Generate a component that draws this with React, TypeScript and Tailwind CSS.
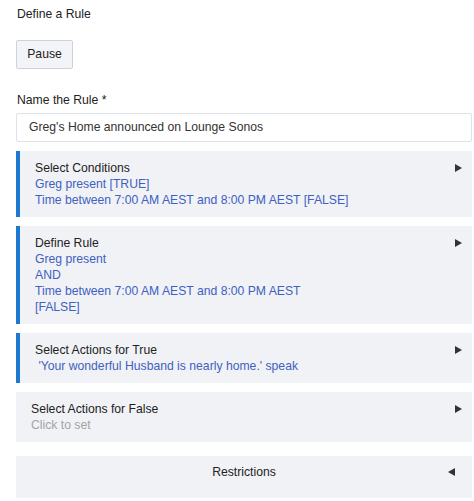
import React from "react";

function Arrow({ dir = "right" }: { dir?: "right" | "left" }) {
  return (
    <svg width="7" height="8" viewBox="0 0 7 8" className="shrink-0">
      {dir === "right" ? (
        <polygon points="0,0 7,4 0,8" fill="#333" />
      ) : (
        <polygon points="7,0 0,4 7,8" fill="#333" />
      )}
    </svg>
  );
}

function Card({
  title,
  lines,
  accent = true,
  muted = false,
}: {
  title: string;
  lines: string[];
  accent?: boolean;
  muted?: boolean;
}) {
  return (
    <div
      className={`flex items-start bg-[#f1f2f6] pt-[9px] pb-[9px] pl-[15px] pr-[10px] ${
        accent ? "border-l-4 border-[#1f78cf]" : ""
      }`}
    >
      <div className="flex-1 leading-4">
        <div className="text-[#222]">{title}</div>
        {lines.map((l, i) => (
          <div
            key={i}
            className={`whitespace-pre ${muted ? "text-[#a3a3a3]" : "text-[#4061c0]"}`}
          >
            {l}
          </div>
        ))}
      </div>
      <div className="pt-1">
        <Arrow />
      </div>
    </div>
  );
}

export default function App() {
  return (
    <div className="min-h-screen bg-white pl-4 pr-[2px] pt-[6px] text-[12.2px] text-[#222] font-['Liberation_Sans',Arial,sans-serif]">
      <div className="leading-4 pl-[1px]">Define a Rule</div>

      <button className="mt-[18px] h-[29px] w-[57px] rounded-[2px] border border-[#cfd2d8] bg-[#f3f4f7] text-[12.2px] text-[#222]">
        Pause
      </button>

      <div className="mt-[23px] leading-4 pl-[1px]">Name the Rule *</div>
      <div className="mt-[5px] flex h-[29px] items-center rounded-[2px] border border-[#dfe2e8] bg-white pl-3 text-[#333]">
        Greg's Home announced on Lounge Sonos
      </div>

      <div className="mt-[9px] flex flex-col gap-[9px]">
        <Card
          title="Select Conditions"
          lines={[
            "Greg present [TRUE]",
            "Time between 7:00 AM AEST and 8:00 PM AEST [FALSE]",
          ]}
        />
        <Card
          title="Define Rule"
          lines={[
            "Greg present",
            "AND",
            "Time between 7:00 AM AEST and 8:00 PM AEST",
            "[FALSE]",
          ]}
        />
        <Card
          title="Select Actions for True"
          lines={[" 'Your wonderful Husband is nearly home.' speak"]}
        />
        <Card
          title="Select Actions for False"
          lines={["Click to set"]}
          accent={false}
          muted
        />
      </div>

      <div className="mt-[14px] flex items-start bg-[#f1f2f6] pt-2 pb-[18px] pl-[24px] pr-[17px]">
        <div className="flex-1 text-center leading-4">Restrictions</div>
        <div className="pt-1">
          <Arrow dir="left" />
        </div>
      </div>
    </div>
  );
}
